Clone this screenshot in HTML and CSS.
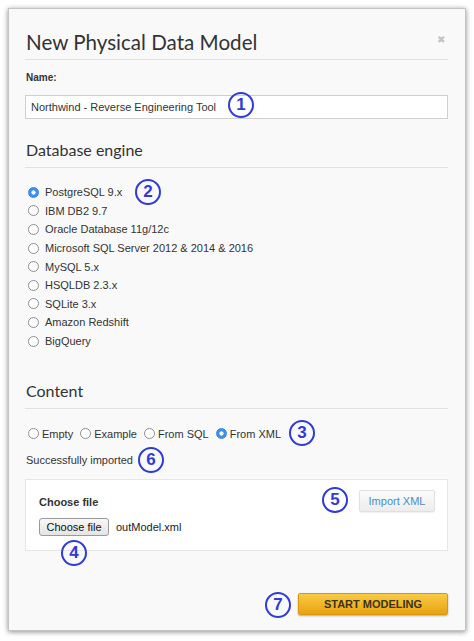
FILE: index.html
```html
<!DOCTYPE html>
<html>
<head>
<meta charset="utf-8">
<link rel="stylesheet" href="styles.css">
</head>
<body>
<div class="modal">
  <div class="header">
    <h1 class="title">New Physical Data Model</h1>
    <span class="close">&#x2716;</span>
  </div>

  <div class="label">Name:</div>
  <input class="name-input" type="text" value="Northwind - Reverse Engineering Tool">

  <h2 class="section">Database engine</h2>
  <div class="engine-list">
    <label class="opt"><input type="radio" name="db" checked><span>PostgreSQL 9.x</span></label>
    <label class="opt"><input type="radio" name="db"><span>IBM DB2 9.7</span></label>
    <label class="opt"><input type="radio" name="db"><span>Oracle Database 11g/12c</span></label>
    <label class="opt"><input type="radio" name="db"><span>Microsoft SQL Server 2012 &amp; 2014 &amp; 2016</span></label>
    <label class="opt"><input type="radio" name="db"><span>MySQL 5.x</span></label>
    <label class="opt"><input type="radio" name="db"><span>HSQLDB 2.3.x</span></label>
    <label class="opt"><input type="radio" name="db"><span>SQLite 3.x</span></label>
    <label class="opt"><input type="radio" name="db"><span>Amazon Redshift</span></label>
    <label class="opt"><input type="radio" name="db"><span>BigQuery</span></label>
  </div>

  <h2 class="section section-content">Content</h2>
  <div class="content-row">
    <label class="copt"><input type="radio" name="ct"><span>Empty</span></label>
    <label class="copt"><input type="radio" name="ct"><span>Example</span></label>
    <label class="copt"><input type="radio" name="ct"><span>From SQL</span></label>
    <label class="copt"><input type="radio" name="ct" checked><span>From XML</span></label>
  </div>
  <div class="status">Successfully imported</div>

  <div class="panel">
    <div class="panel-top">
      <span class="panel-label">Choose file</span>
      <button class="import-btn">Import XML</button>
    </div>
    <div class="file-row">
      <button class="file-btn">Choose file</button>
      <span class="file-name">outModel.xml</span>
    </div>
  </div>

  <div class="footer">
    <button class="start-btn">START MODELING</button>
  </div>

  <span class="mark m1">1</span>
  <span class="mark m2">2</span>
  <span class="mark m3">3</span>
  <span class="mark m4">4</span>
  <span class="mark m5">5</span>
  <span class="mark m6">6</span>
  <span class="mark m7">7</span>
</div>
</body>
</html>
```

FILE: styles.css
```css
html, body {
  margin: 0;
  padding: 0;
  background: #ffffff;
}

body {
  font-family: "Liberation Sans", Arial, sans-serif;
  color: #333;
}

.modal {
  position: relative;
  box-sizing: border-box;
  width: 458px;
  margin: 8px;
  padding: 19px 17px 15px 16px;
  background: #f9f9f9;
  border: 1px solid #c4c4c4;
  box-shadow: 0 1px 5px rgba(0, 0, 0, 0.45);
  display: flex;
  flex-direction: column;
}

.header {
  display: flex;
  justify-content: space-between;
  align-items: center;
  padding-bottom: 3px;
  border-bottom: 1px solid #e2e2e2;
}

.title {
  margin: 0;
  font-family: "Lato", "Open Sans", sans-serif;
  font-weight: 400;
  font-size: 20.6px;
  line-height: 28px;
  color: #333;
  padding-left: 1px;
}

.close {
  font-size: 10px;
  color: #c4c4c4;
  margin-right: 3px;
  margin-top: -6px;
}

.label {
  margin-top: 11px;
  font-size: 10px;
  font-weight: bold;
  line-height: 14px;
  color: #333;
  padding-left: 1px;
}

.name-input {
  margin: 10px 0 0 0;
  box-sizing: border-box;
  height: 24px;
  width: 100%;
  border: 1px solid #cfcfcf;
  background: #fff;
  padding: 0 5px;
  font-family: "Liberation Sans", Arial, sans-serif;
  font-size: 11px;
  color: #333;
  outline: none;
}

.section {
  margin: 19px 0 0 0;
  font-family: "Lato", "Open Sans", sans-serif;
  font-weight: 400;
  font-size: 16px;
  line-height: 24px;
  color: #333;
  padding: 0 0 5px 1px;
  border-bottom: 1px solid #e2e2e2;
}

.section-content {
  margin-top: 29px;
}

.engine-list {
  margin-top: 15px;
  display: flex;
  flex-direction: column;
}

input[type="radio"] {
  -webkit-appearance: none;
  appearance: none;
  box-sizing: border-box;
  width: 11px;
  height: 11px;
  margin: 0;
  border: 1px solid #8f8f8f;
  border-radius: 50%;
  background: #fff;
  flex: none;
}

input[type="radio"]:checked {
  border-color: #3a82e8;
  background: radial-gradient(circle, #ffffff 0 1.8px, #3d8ef5 2.4px);
}

.opt {
  display: flex;
  align-items: center;
  height: 18.6px;
  font-size: 11px;
  color: #333;
}

.opt input {
  margin-left: 3px;
  margin-right: 6px;
}

.content-row {
  margin-top: 15px;
  display: flex;
  align-items: center;
  height: 18.6px;
  gap: 7px;
}

.copt {
  display: flex;
  align-items: center;
  font-size: 11px;
  color: #333;
}

.copt input {
  margin-right: 3px;
}

.copt:first-child input {
  margin-left: 3px;
}

.status {
  margin-top: 8px;
  font-size: 11px;
  line-height: 18.6px;
  padding-left: 1px;
  color: #333;
}

.panel {
  margin-top: 9px;
  background: #fff;
  border: 1px solid #e6e6e6;
  padding: 10px 12px 14px 13px;
  display: flex;
  flex-direction: column;
}

.panel-top {
  display: flex;
  justify-content: space-between;
  align-items: center;
}

.panel-label {
  font-size: 11px;
  font-weight: bold;
  color: #333;
  margin-top: 2px;
}

.import-btn {
  box-sizing: border-box;
  width: 76px;
  height: 22px;
  padding: 0;
  border: 1px solid #e0e0e0;
  border-radius: 2px;
  background: linear-gradient(#fbfbfb, #ededed);
  box-shadow: 0 1px 1px rgba(0, 0, 0, 0.06);
  font-family: "Liberation Sans", Arial, sans-serif;
  font-size: 11px;
  color: #4a8ec4;
}

.file-row {
  margin-top: 6px;
  display: flex;
  align-items: center;
  gap: 7px;
}

.file-btn {
  box-sizing: border-box;
  width: 70px;
  height: 18px;
  padding: 0;
  border: 1px solid #9a9a9a;
  border-radius: 3px;
  background: linear-gradient(#f7f7f7, #e4e4e4);
  font-family: "Liberation Sans", Arial, sans-serif;
  font-size: 11px;
  color: #111;
}

.file-name {
  font-size: 11px;
  color: #222;
}

.footer {
  margin-top: 42px;
  display: flex;
  justify-content: flex-end;
}

.start-btn {
  box-sizing: border-box;
  width: 150px;
  height: 22px;
  padding: 0;
  border: 1px solid #d9990f;
  border-radius: 2px;
  background: linear-gradient(#f8cb45, #e9a210);
  box-shadow: 0 1px 2px rgba(0, 0, 0, 0.3);
  font-family: "Liberation Sans", Arial, sans-serif;
  font-size: 11px;
  font-weight: bold;
  color: #3a3318;
}

.mark {
  position: absolute;
  box-sizing: border-box;
  width: 26px;
  height: 26px;
  border: 2px solid #2f3bd9;
  border-radius: 50%;
  color: #2f3bd9;
  font-family: "Liberation Sans", Arial, sans-serif;
  font-weight: bold;
  font-size: 17px;
  line-height: 22px;
  text-align: center;
}

.m1 { left: 219px; top: 83px; }
.m2 { left: 126px; top: 170px; }
.m3 { left: 280px; top: 411px; }
.m4 { left: 52px; top: 531px; }
.m5 { left: 313px; top: 478px; }
.m6 { left: 129px; top: 438px; }
.m7 { left: 256px; top: 583px; }
```
